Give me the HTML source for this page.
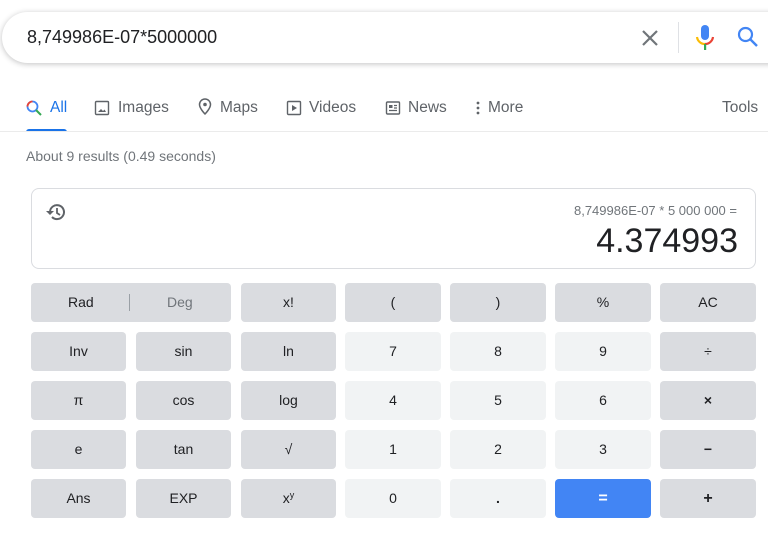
<!DOCTYPE html><html><head><style>
body{margin:0;width:768px;height:536px;background:#fff;font-family:"Liberation Sans",Arial,sans-serif;position:relative;overflow:hidden;color:#202124}
.sb{position:absolute;left:2px;top:12px;width:800px;height:51px;border-radius:26px;box-shadow:0 1px 6px rgba(32,33,36,.28);background:#fff}
.q{position:absolute;left:27px;top:27px;font-size:18px;color:#202124}
.tab{position:absolute;top:99px;font-size:15.5px;color:#5f6368}
.b{position:absolute;height:39px;border-radius:4px;background:#dadce0;font-size:14px;text-align:center;line-height:39px;color:#202124}
.n{background:#f1f3f4}
</style></head><body>
<div class="sb"></div>
<div class="q">8,749986E-07*5000000</div>
<svg style="position:absolute;left:641px;top:29px" width="18" height="18"><path d="M2 2L16 16M16 2L2 16" stroke="#70757a" stroke-width="2.2"/></svg>
<div style="position:absolute;left:678px;top:22px;width:1px;height:31px;background:#dfe1e5"></div>
<svg style="position:absolute;left:695px;top:24px" width="20" height="28"><rect x="6" y="1" width="8" height="15" rx="4" fill="#4285f4"/><path d="M2 13a8 8 0 0 0 8 7" stroke="#fbbc05" stroke-width="2.2" fill="none"/><path d="M18 13a8 8 0 0 1-8 7" stroke="#ea4335" stroke-width="2.2" fill="none"/><rect x="9" y="20" width="2.2" height="6" fill="#34a853"/></svg>
<svg style="position:absolute;left:737px;top:26px" width="22" height="22"><circle cx="8.5" cy="8.5" r="6.5" stroke="#4285f4" stroke-width="2.2" fill="none"/><path d="M13 13L20 20" stroke="#4285f4" stroke-width="2.4"/></svg>
<svg style="position:absolute;left:26px;top:100px" width="16" height="16"><circle cx="6.5" cy="6.5" r="5" stroke="#4285f4" stroke-width="1.8" fill="none"/><path d="M10 10L15 15" stroke="#34a853" stroke-width="2"/><path d="M1.5 6.5a5 5 0 0 1 5-5" stroke="#ea4335" stroke-width="1.8" fill="none"/></svg>
<div class="tab" style="left:50px;color:#1a73e8">All</div>
<div style="position:absolute;left:26px;top:129px;width:41px;height:3px;background:#1a73e8;border-radius:3px 3px 0 0"></div>
<div style="position:absolute;left:0;top:131px;width:768px;height:1px;background:#ebebeb"></div>
<svg style="position:absolute;left:94px;top:100px" width="16" height="16"><rect x="1.5" y="1.5" width="13" height="13" rx="1" stroke="#5f6368" stroke-width="1.4" fill="none"/><path d="M4 12l3-3 2 2 1.5-1.5L12 12z" fill="#5f6368"/></svg>
<div class="tab" style="left:118px">Images</div>
<svg style="position:absolute;left:197px;top:98px" width="16" height="18"><path d="M8 16s-5.5-5.5-5.5-9.5a5.5 5.5 0 0 1 11 0C13.5 10.5 8 16 8 16z" stroke="#5f6368" stroke-width="1.5" fill="none"/><circle cx="8" cy="6.5" r="1.8" fill="#5f6368"/></svg>
<div class="tab" style="left:220px">Maps</div>
<svg style="position:absolute;left:286px;top:100px" width="16" height="16"><rect x="1.5" y="1.5" width="13" height="13" rx="1" stroke="#5f6368" stroke-width="1.4" fill="none"/><path d="M6 5v6l5-3z" fill="#5f6368"/></svg>
<div class="tab" style="left:309px">Videos</div>
<svg style="position:absolute;left:385px;top:100px" width="16" height="16"><rect x="1.5" y="2" width="13" height="12" rx="1" stroke="#5f6368" stroke-width="1.4" fill="none"/><rect x="4" y="5" width="3.5" height="3" fill="#5f6368"/><path d="M9 5.5h3M9 8h3M4 10.5h8" stroke="#5f6368" stroke-width="1.2"/></svg>
<div class="tab" style="left:408px">News</div>
<svg style="position:absolute;left:475px;top:100px" width="6" height="16"><circle cx="3" cy="3" r="1.4" fill="#5f6368"/><circle cx="3" cy="8" r="1.4" fill="#5f6368"/><circle cx="3" cy="13" r="1.4" fill="#5f6368"/></svg>
<div class="tab" style="left:488px">More</div>
<div class="tab" style="left:722px">Tools</div>
<div style="position:absolute;left:26px;top:148px;font-size:14px;color:#70757a">About 9 results (0.49 seconds)</div>
<div style="position:absolute;left:31px;top:188px;width:723px;height:79px;border:1px solid #dadce0;border-radius:8px"></div>
<svg style="position:absolute;left:45px;top:202px" width="22" height="20"><path d="M5 10a7 7 0 1 1 2 5" stroke="#5f6368" stroke-width="2" fill="none"/><path d="M1 9l4 4 4-4z" fill="#5f6368"/><path d="M12 6v5l3 2" stroke="#5f6368" stroke-width="1.8" fill="none"/></svg>
<div style="position:absolute;right:31px;top:203px;font-size:13px;color:#70757a">8,749986E-07 * 5 000 000 =</div>
<div style="position:absolute;right:30px;top:222px;font-size:34px;color:#202124">4.374993</div>
<div class="b" style="left:31px;top:283px;width:200px"><span style="position:absolute;left:37px">Rad</span><span style="position:absolute;left:98px;top:11px;width:1px;height:17px;background:#9aa0a6"></span><span style="position:absolute;left:136px;color:#70757a">Deg</span></div>
<div class="b" style="left:241px;top:283px;width:95px">x!</div>
<div class="b" style="left:345px;top:283px;width:96px">(</div>
<div class="b" style="left:450px;top:283px;width:96px">)</div>
<div class="b" style="left:555px;top:283px;width:96px">%</div>
<div class="b" style="left:660px;top:283px;width:96px">AC</div>

<div class="b" style="left:31px;top:332px;width:95px">Inv</div>
<div class="b" style="left:136px;top:332px;width:95px">sin</div>
<div class="b" style="left:241px;top:332px;width:95px">ln</div>
<div class="b n" style="left:345px;top:332px;width:96px">7</div>
<div class="b n" style="left:450px;top:332px;width:96px">8</div>
<div class="b n" style="left:555px;top:332px;width:96px">9</div>
<div class="b" style="left:660px;top:332px;width:96px">÷</div>

<div class="b" style="left:31px;top:381px;width:95px">π</div>
<div class="b" style="left:136px;top:381px;width:95px">cos</div>
<div class="b" style="left:241px;top:381px;width:95px">log</div>
<div class="b n" style="left:345px;top:381px;width:96px">4</div>
<div class="b n" style="left:450px;top:381px;width:96px">5</div>
<div class="b n" style="left:555px;top:381px;width:96px">6</div>
<div class="b" style="left:660px;top:381px;width:96px;font-weight:bold">×</div>

<div class="b" style="left:31px;top:430px;width:95px">e</div>
<div class="b" style="left:136px;top:430px;width:95px">tan</div>
<div class="b" style="left:241px;top:430px;width:95px">√</div>
<div class="b n" style="left:345px;top:430px;width:96px">1</div>
<div class="b n" style="left:450px;top:430px;width:96px">2</div>
<div class="b n" style="left:555px;top:430px;width:96px">3</div>
<div class="b" style="left:660px;top:430px;width:96px;font-weight:bold">−</div>

<div class="b" style="left:31px;top:479px;width:95px">Ans</div>
<div class="b" style="left:136px;top:479px;width:95px">EXP</div>
<div class="b" style="left:241px;top:479px;width:95px">x<span style="font-size:9px;position:relative;top:-5px">y</span></div>
<div class="b n" style="left:345px;top:479px;width:96px">0</div>
<div class="b n" style="left:450px;top:479px;width:96px;font-weight:bold">.</div>
<div class="b" style="left:555px;top:479px;width:96px;background:#4285f4;color:#fff;font-weight:bold;font-size:16px">=</div>
<div class="b" style="left:660px;top:479px;width:96px;font-weight:bold;font-size:16px">+</div>
</body></html>
